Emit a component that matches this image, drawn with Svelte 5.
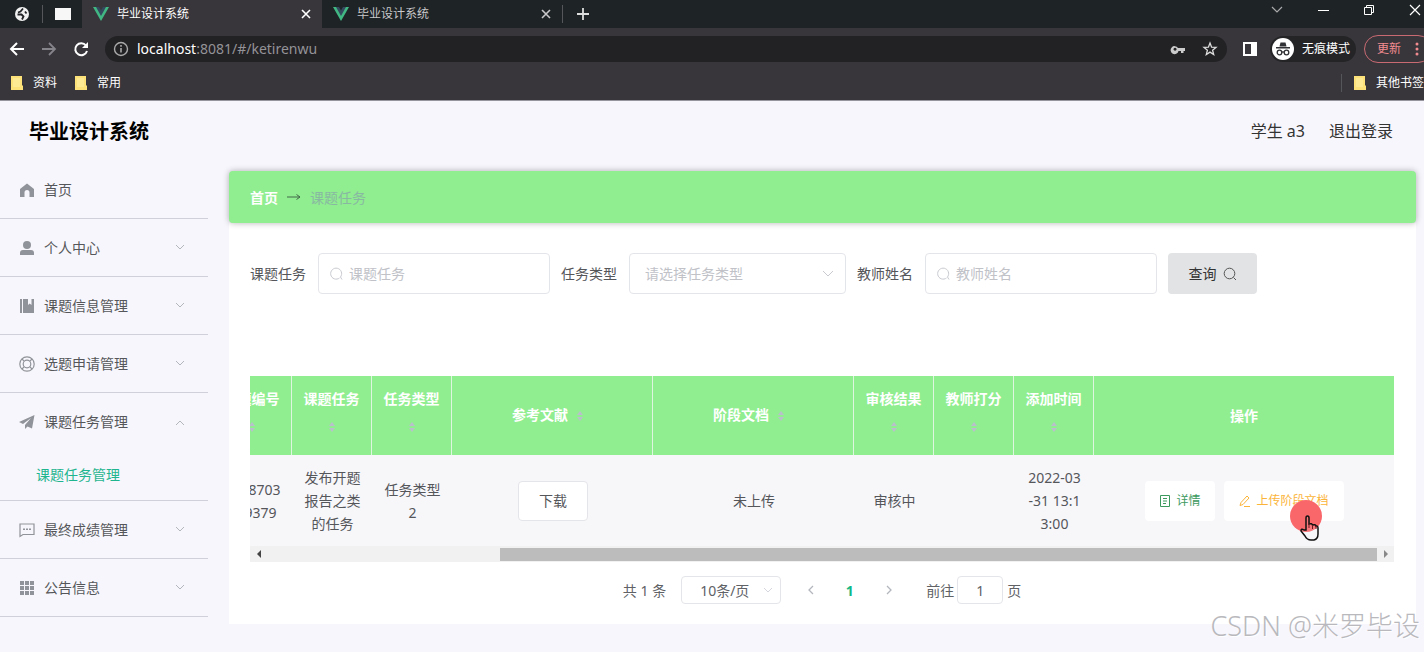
<script>
    let menu = [
        { title: "首页", icon: "home" },
        { title: "个人中心", icon: "user", children: [] },
        { title: "课题信息管理", icon: "book", children: [] },
        { title: "选题申请管理", icon: "help", children: [] },
        { title: "课题任务管理", icon: "plane", open: true, children: ["课题任务管理"] },
        { title: "最终成绩管理", icon: "chat", children: [] },
        { title: "公告信息", icon: "grid", children: [] }
    ]
    let columns = [
        { title: "课题编号", sort: true },
        { title: "课题任务", sort: true },
        { title: "任务类型", sort: true },
        { title: "参考文献", sort: true, wide: true },
        { title: "阶段文档", sort: true, wide: true },
        { title: "审核结果", sort: true },
        { title: "教师打分", sort: true },
        { title: "添加时间", sort: true },
        { title: "操作", last: true }
    ]
    let rows = [
        {
            id: "1648703579379",
            name: "发布开题报告之类的任务",
            type: "任务类型2",
            doc: "未上传",
            result: "审核中",
            score: "",
            time: "2022-03-31 13:13:00"
        }
    ]
    let name = ""
    let teacher = ""
    let type = ""
    let page = 1

    function Toggle(i){
        if(menu[i].children){
            menu[i].open = !menu[i].open;
            menu = menu;
        }
    }
</script>

<div class="page">
    <!-- Browser window: -->
    <div class="browser">
        <div class="tabs">
            <div class="pinned">
                <svg width="16" height="16" viewBox="0 0 16 16"><circle cx="8" cy="8" r="7" fill="#f1f1f1"/><path d="M9 2.500L6.500 5.500 4 6.500M3.500 8.500h4l2 2-1.500 3M11 5.500l1.500 2" fill="none" stroke="#202124" stroke-width="1.800"/></svg>
                <span class="line"></span>
                <svg width="16" height="12" viewBox="0 0 16 12"><path d="M0 0h16v12H0z" fill="#f7f7f7"/></svg>
            </div>
            {#each [true, false] as active}
                <div class="tab" class:active>
                    <svg width="16" height="14" viewBox="0 0 16 14"><path d="M0 0h4l4 7 4-7h4L8 14z" fill="#41b883"/><path d="M3 0h3l2 3.500 2-3.500h3L8 9z" fill="#35495e"/></svg>
                    <span>毕业设计系统</span>
                    <button aria-label="关闭标签页"><svg width="10" height="10" viewBox="0 0 10 10"><path d="M1 1l8 8M9 1L1 9" stroke="currentColor" stroke-width="1.600"/></svg></button>
                </div>
            {/each}
            <span class="line"></span>
            <button class="plus" aria-label="新标签页"><svg width="12" height="12" viewBox="0 0 12 12"><path d="M6 0v12M0 6h12" stroke="currentColor" stroke-width="1.800"/></svg></button>
            <div class="window">
                <button aria-label="搜索标签页"><svg width="12" height="12" viewBox="0 0 12 12"><path d="M1 3l5 5 5-5" fill="none" stroke="#aaa" stroke-width="1.200"/></svg></button>
                <button aria-label="最小化"><svg width="12" height="12" viewBox="0 0 12 12"><path d="M1 6.500h11" stroke="#fff"/></svg></button>
                <button aria-label="还原"><svg width="12" height="12" viewBox="0 0 12 12"><path d="M1.500 3.500h7v7h-7zM3.500 3.500v-2h7v7h-2" fill="none" stroke="#fff"/></svg></button>
                <button aria-label="关闭"><svg width="12" height="12" viewBox="0 0 12 12"><path d="M1 1l10 10M11 1L1 11" stroke="#fff" stroke-width="1.200"/></svg></button>
            </div>
        </div>
        <div class="toolbar">
            <button aria-label="后退"><svg width="16" height="16" viewBox="0 0 16 16"><path d="M15 8H2M8 2L2 8l6 6" fill="none" stroke="#fff" stroke-width="2"/></svg></button>
            <button aria-label="前进"><svg width="16" height="16" viewBox="0 0 16 16"><path d="M1 8h13M8 2l6 6-6 6" fill="none" stroke="#85848a" stroke-width="1.800"/></svg></button>
            <button aria-label="刷新"><svg width="16" height="16" viewBox="0 0 16 16"><path d="M13 4.500A6 6 0 1 0 14 10" fill="none" stroke="#fff" stroke-width="2"/><path d="M15 1v6H9z" fill="#fff"/></svg></button>
            <div class="omnibox">
                <svg width="16" height="16" viewBox="0 0 16 16"><circle cx="8" cy="8" r="6.500" fill="none" stroke="#aaa" stroke-width="1.400"/><path d="M8 7v4.500M8 4v1.800" stroke="#aaa" stroke-width="1.600"/></svg>
                <span class="url"><b>localhost</b>:8081/#/ketirenwu</span>
                <svg width="16" height="16" viewBox="0 0 16 16"><path d="M8 7h7v3h-1.500v2h-2.500v-2H8.500A4 4 0 1 1 8 7zM5 6.700a1.500 1.500 0 1 0 .1 0z" fill="#ccc" fill-rule="evenodd"/></svg>
                <svg width="16" height="16" viewBox="0 0 16 16"><path d="M8 2l1.600 4.200 4.400.2-3.400 2.800 1.100 4.300L8 11.100l-3.700 2.400 1.100-4.300L2 6.400l4.400-.2z" fill="none" stroke="#ddd" stroke-width="1.300"/></svg>
            </div>
            <svg width="14" height="14" viewBox="0 0 14 14"><path d="M0 0h14v14H0zM2 2v10h6V2z" fill="#fff" fill-rule="evenodd"/></svg>
            <div class="incognito">
                <svg width="22" height="22" viewBox="0 0 22 22"><circle cx="11" cy="11" r="11" fill="#fff"/><path d="M7.500 8.500L8.500 4.500h5l1 4zM4 9h14v1.400H4z" fill="#303134"/><g fill="none" stroke="#303134" stroke-width="1.300"><circle cx="7.500" cy="14.500" r="2.300"/><circle cx="14.500" cy="14.500" r="2.300"/><path d="M9.800 14h2.400"/></g></svg>
                无痕模式
            </div>
            <button class="update">更新
                <svg width="4" height="14" viewBox="0 0 4 14" fill="#f28b90"><circle cx="2" cy="2" r="1.500"/><circle cx="2" cy="7" r="1.500"/><circle cx="2" cy="12" r="1.500"/></svg>
            </button>
        </div>
        <div class="bookmarks">
            {#each ["资料", "常用", "其他书签"] as mark, i}
                {#if i == 2}<span class="line"></span>{/if}
                <a href="#/">
                    <svg width="12" height="14" viewBox="0 0 12 14"><path d="M0 0h11v9l1 1v4H0z" fill="#fde27a"/><path d="M2 2h7v9H2z" fill="#ffea94"/></svg>
                    {mark}
                </a>
            {/each}
        </div>
    </div>

    <header>
        <h1>毕业设计系统</h1>
        <span>学生 a3</span>
        <a href="#/login">退出登录</a>
    </header>

    <div class="body">
        <nav>
            {#each menu as item, i}
                <div class="item">
                    <button on:click={() => {Toggle(i)}}>
                        <svg width="16" height="16" viewBox="0 0 16 16" fill="#909399">
                            {#if item.icon == "home"}
                                <path d="M8 1.500L1 7v8h4.500v-4.500a2.500 2.500 0 0 1 5 0V15H15V7z"/>
                            {:else if item.icon == "user"}
                                <circle cx="8" cy="5" r="4"/><path d="M1 15v-2q0-3 3-3h8q3 0 3 3v2z"/>
                            {:else if item.icon == "book"}
                                <path d="M1 1h2v14H1zM4 1h5v6l1.700-1.500L12.500 7V1H15v14H4z"/>
                            {:else if item.icon == "help"}
                                <g fill="none" stroke="#909399" stroke-width="1.200"><circle cx="8" cy="8" r="7.200"/><circle cx="8" cy="8" r="3.800"/><path d="M3 3l2.300 2.300M13 3l-2.300 2.300M3 13l2.300-2.300M13 13l-2.300-2.300"/></g>
                            {:else if item.icon == "plane"}
                                <path d="M15.500 1L0 8l4 2 8-6-6 7v4l2.500-2.500L13 14.500z"/>
                            {:else if item.icon == "chat"}
                                <path d="M1 2h14v10.500H4L1 14.500z" fill="none" stroke="#909399" stroke-width="1.200"/><path d="M4 6.500h2v1.500H4zM7 6.500h2v1.500H7zM10 6.500h2v1.500h-2z"/>
                            {:else}
                                <path d="M1 1h4v4H1zM6 1h4v4H6zM11 1h4v4h-4zM1 6h4v4H1zM6 6h4v4H6zM11 6h4v4h-4zM1 11h4v4H1zM6 11h4v4H6zM11 11h4v4h-4z"/>
                            {/if}
                        </svg>
                        <span>{item.title}</span>
                        {#if item.children}
                            <svg class="arrow" class:open={item.open} width="10" height="10" viewBox="0 0 10 10"><path d="M1 2l4 4 4-4" fill="none" stroke="#b4b6bd"/></svg>
                        {/if}
                    </button>
                    {#if item.open}
                        {#each item.children as child}
                            <a href="#/ketirenwu">{child}</a>
                        {/each}
                    {/if}
                </div>
            {/each}
        </nav>

        <main>
            <div class="crumbs">
                <a href="#/">首页</a>
                <svg width="14" height="8" viewBox="0 0 14 8"><path d="M0 4h13M9.500 1.500L13 4 9.500 6.500" fill="none" stroke="#43664a"/></svg>
                <span>课题任务</span>
            </div>
            <div class="panel">
                <form class="filters" on:submit|preventDefault>
                    <label for="name">课题任务</label>
                    <div class="field">
                        <svg width="14" height="14" viewBox="0 0 14 14"><path d="M10.500 11A5.500 5.500 0 1 1 11.500 10l1.500 2.500" fill="none" stroke="#c8cad0"/></svg>
                        <input id="name" placeholder="课题任务" bind:value={name}>
                    </div>
                    <label for="type">任务类型</label>
                    <div class="field pick">
                        <select id="type" bind:value={type}>
                            <option value="">请选择任务类型</option>
                            <option value="2">任务类型2</option>
                        </select>
                        <svg width="12" height="12" viewBox="0 0 12 12"><path d="M1 3l5 5 5-5" fill="none" stroke="#c8cad0"/></svg>
                    </div>
                    <label for="teacher">教师姓名</label>
                    <div class="field">
                        <svg width="14" height="14" viewBox="0 0 14 14"><path d="M10.500 11A5.500 5.500 0 1 1 11.500 10l1.500 2.500" fill="none" stroke="#c8cad0"/></svg>
                        <input id="teacher" placeholder="教师姓名" bind:value={teacher}>
                    </div>
                    <button class="search">查询
                        <svg width="14" height="14" viewBox="0 0 14 14"><circle cx="6.500" cy="6.500" r="5.300" fill="none" stroke="#555"/><path d="M10.500 10.500L13 13" stroke="#555"/></svg>
                    </button>
                </form>

                <div class="tableBox">
                    <table>
                        <thead>
                            <tr>
                                {#each columns as col}
                                    <th class:wide={col.wide} class:last={col.last}>
                                        {col.title}{#if col.sort}<span class="caret"><svg width="8" height="12" viewBox="0 0 8 12"><path d="M4 1l3 4H1zM4 11l3-4H1z" fill="#b9bfcb"/></svg></span>{/if}
                                    </th>
                                {/each}
                            </tr>
                        </thead>
                        <tbody>
                            {#each rows as row}
                                <tr>
                                    <td>{row.id}</td>
                                    <td>{row.name}</td>
                                    <td>{row.type}</td>
                                    <td><button class="download">下载</button></td>
                                    <td>{row.doc}</td>
                                    <td>{row.result}</td>
                                    <td>{row.score}</td>
                                    <td>{row.time}</td>
                                    <td>
                                        <div class="actions">
                                            <button class="detail">
                                                <svg width="12" height="12" viewBox="0 0 12 12"><path d="M1.500.5h9v11h-9zM4 3.500h4M4 6h4M4 8.500h3" fill="none" stroke="currentColor"/></svg>
                                                详情
                                            </button>
                                            <button class="upload">
                                                <svg width="12" height="12" viewBox="0 0 12 12"><path d="M2 7.500L8 1l2 2-6 6.500-3 1zM5 11.500h6" fill="none" stroke="currentColor"/></svg>
                                                上传阶段文档
                                                <span class="pointer">
                                                    <svg width="36" height="46" viewBox="0 0 36 46"><circle cx="17" cy="17" r="16" fill="#f9676b"/><path d="M17 31V19q0-2 1.500-2t1.500 2v6q3-1 3.500 1 3-1 3.500 1 2-.5 2 2v6q0 5-4 6h-3q-4 0-6-4l-4-5q0-3 3-1z" fill="#fff" fill-opacity=".1" stroke="#111" stroke-width="1.500"/><path d="M20 24v5M23.500 26v4M27 27v3" stroke="#6b1a20"/></svg>
                                                </span>
                                            </button>
                                        </div>
                                    </td>
                                </tr>
                            {/each}
                        </tbody>
                    </table>
                </div>
                <div class="scroll">
                    <svg width="17" height="16" viewBox="0 0 17 16"><path d="M11 4v8L7 8z" fill="#444"/></svg>
                    <div class="track"><div class="thumb"></div></div>
                    <svg width="17" height="16" viewBox="0 0 17 16"><path d="M7 4v8l4-4z" fill="#888"/></svg>
                </div>

                <div class="pager">
                    <span>共 1 条</span>
                    <div class="size">
                        <select aria-label="每页条数">
                            <option>10条/页</option>
                            <option>20条/页</option>
                        </select>
                        <svg width="10" height="10" viewBox="0 0 10 10"><path d="M1 3l4 4 4-4" fill="none" stroke="#d5d7dd"/></svg>
                    </div>
                    <button aria-label="上一页"><svg width="10" height="12" viewBox="0 0 10 12"><path d="M7 2L3 6l4 4" fill="none" stroke="#b4b6bd" stroke-width="1.300"/></svg></button>
                    <button class="current">1</button>
                    <button aria-label="下一页"><svg width="10" height="12" viewBox="0 0 10 12"><path d="M3 2l4 4-4 4" fill="none" stroke="#b4b6bd" stroke-width="1.300"/></svg></button>
                    <label for="page">前往</label>
                    <input id="page" bind:value={page}>
                    <span>页</span>
                </div>
            </div>
        </main>
    </div>
    <div class="watermark">CSDN @米罗毕设</div>
</div>

<style>
    :global(body) {
        background-color: #f7f6fc;
    }
    .page {
        --green: #90ee90;
        --border: #e4e5ea;
        --text: #55565a;

        position: relative;
        min-height: 100vh;
        overflow: hidden;
        color: var(--text);
        font-family: "Noto Sans", "Noto Sans CJK SC", sans-serif;
        font-size: 14px;
        line-height: 23px;
    }
    svg {
        display: block;
        flex: none;
    }
    button, input, select {
        font: inherit;
        color: inherit;
        margin: 0;
        padding: 0;
        border: none;
        background: none;
        box-sizing: border-box;
        outline: none;
    }
    select {
        appearance: none;
    }
    a {
        color: inherit;
        text-decoration: none;
    }

    /* Browser window */
    .browser {
        background-color: #38363b;
        border-bottom: 1px solid #96949c;
        color: #fff;
        font-size: 12px;
        line-height: 16px;
    }
    .tabs {
        display: flex;
        align-items: center;
        height: 28px;
        background-color: #1e2326;
    }
    .pinned {
        display: flex;
        align-items: center;
        gap: 12px;
        width: 82px;
        padding-left: 14px;
        box-sizing: border-box;
    }
    .line {
        width: 1px;
        height: 18px;
        background-color: #55565a;
    }
    .tab {
        display: flex;
        align-items: center;
        gap: 8px;
        width: 240px;
        height: 28px;
        padding: 0 11px;
        box-sizing: border-box;
        color: #c8c8ca;
    }
    .tab.active {
        background-color: #38363b;
        color: #fff;
    }
    .tab button {
        margin-left: auto;
    }
    .plus {
        margin-left: 14px;
        color: #ddd;
    }
    .window {
        display: flex;
        gap: 34px;
        height: 20px;
        align-items: center;
        align-self: flex-start;
        margin-left: auto;
        padding-right: 3px;
    }
    .toolbar {
        display: flex;
        align-items: center;
        gap: 16px;
        height: 41px;
        padding-left: 9px;
        margin-right: -8px;
    }
    .omnibox {
        flex: 1;
        display: flex;
        align-items: center;
        gap: 16px;
        height: 26px;
        padding: 0 9px 0 8px;
        border-radius: 13px;
        background-color: #222124;
    }
    .url {
        flex: 1;
        margin-left: -8px;
        color: #949397;
        font-size: 14px;
    }
    .url b {
        color: #fff;
        font-weight: 400;
    }
    .incognito {
        display: flex;
        align-items: center;
        gap: 8px;
        margin-left: -3px;
        margin-right: -8px;
        padding: 2px 6px 2px 2px;
        border-radius: 13px;
        background-color: #242427;
        white-space: nowrap;
    }
    .update {
        display: flex;
        align-items: center;
        justify-content: space-between;
        width: 68px;
        height: 28px;
        padding: 0 12px;
        border: 1px solid #c96a72;
        border-radius: 14px;
        color: #f28b90;
    }
    .bookmarks {
        display: flex;
        align-items: center;
        gap: 18px;
        height: 31px;
        padding: 0 0 4px 11px;
        box-sizing: border-box;
    }
    .bookmarks a {
        display: flex;
        gap: 10px;
        align-items: center;
    }
    .bookmarks .line {
        margin-left: auto;
        margin-right: -6px;
    }

    header {
        display: flex;
        align-items: center;
        gap: 24px;
        height: 60px;
        padding: 0 31px 0 29px;
        color: #333;
        font-size: 16px;
    }
    h1 {
        flex: 1;
        margin: 0;
        color: #000;
        font-size: 20px;
    }
    .body {
        display: flex;
        gap: 21px;
        padding-right: 8px;
    }

    /* Side menu */
    nav {
        flex: none;
        width: 208px;
    }
    .item {
        border-bottom: 1px solid #cfd0da;
    }
    .item button {
        display: flex;
        align-items: center;
        gap: 9px;
        width: 100%;
        height: 57px;
        padding: 0 23px 0 19px;
        text-align: left;
    }
    .item span {
        flex: 1;
    }
    .item a {
        display: block;
        padding-left: 36px;
        height: 50px;
        line-height: 50px;
        color: #1fb58f;
    }
    .arrow.open {
        transform: rotate(180deg);
    }

    main {
        flex: 1;
        min-width: 0;
        padding-top: 10px;
    }
    .crumbs {
        display: flex;
        align-items: center;
        gap: 9px;
        height: 52px;
        padding: 0 21px;
        border-radius: 4px;
        background-color: var(--green);
        box-shadow: 0 0 6px rgba(0, 0, 0, 0.3);
        position: relative;
    }
    .crumbs a {
        color: #fff;
        font-weight: 700;
    }
    .crumbs span {
        color: #89b8a2;
    }
    .panel {
        padding: 30px 22px 20px 21px;
        background-color: #fff;
    }
    .filters {
        display: flex;
        align-items: center;
        gap: 11px;
        margin-bottom: 82px;
    }
    .filters label {
        padding-right: 1px;
    }
    .field {
        display: flex;
        align-items: center;
        gap: 6px;
        width: 232px;
        height: 41px;
        padding: 0 10px;
        border: 1px solid var(--border);
        border-radius: 4px;
        box-sizing: border-box;
    }
    .field input, .field select {
        flex: 1;
        min-width: 0;
        height: 100%;
    }
    .field input::placeholder {
        color: #c0c2c8;
        opacity: 1;
    }
    .field.pick {
        width: 217px;
        padding: 0 11px 0 15px;
        color: #c0c2c8;
    }
    .search {
        display: flex;
        align-items: center;
        justify-content: center;
        gap: 6px;
        width: 89px;
        height: 41px;
        border-radius: 4px;
        background-color: #e2e3e4;
        color: #333;
    }

    .tableBox {
        display: flex;
        justify-content: flex-end;
        overflow: hidden;
    }
    table {
        flex: none;
        width: 100%;
        min-width: 1182px;
        table-layout: fixed;
        border-collapse: separate;
        border-spacing: 0;
        text-align: center;
    }
    th {
        width: 80px;
        height: 79px;
        padding: 0 10px;
        box-sizing: border-box;
        border-right: 1px solid #e0f5e0;
        background-color: var(--green);
        color: #fff;
    }
    th.wide {
        width: 201px;
    }
    th.last {
        width: auto;
        border-right: none;
    }
    .caret {
        display: inline-flex;
        align-items: center;
        justify-content: center;
        width: 24px;
        height: 34px;
        vertical-align: middle;
    }
    td {
        padding: 11px 11px 11px 12px;
        background-color: #f7f7fa;
        line-break: anywhere;
    }
    .download {
        width: 70px;
        height: 40px;
        border: 1px solid var(--border);
        border-radius: 4px;
        background-color: #fff;
        vertical-align: middle;
    }
    .actions {
        display: flex;
        justify-content: center;
        gap: 9px;
    }
    .actions button {
        position: relative;
        display: flex;
        align-items: center;
        justify-content: center;
        gap: 5px;
        width: 70px;
        height: 40px;
        border-radius: 4px;
        background-color: #fff;
        color: #3d9a5f;
        font-size: 12px;
        white-space: nowrap;
    }
    .actions .upload {
        width: 120px;
        color: #fbb43a;
    }
    .pointer {
        position: absolute;
        left: 65px;
        top: 18px;
    }
    .scroll {
        display: flex;
        height: 16px;
        background-color: #f1f1f1;
    }
    .track {
        flex: 1;
        display: flex;
        justify-content: flex-end;
        padding: 2px 0 1px;
    }
    .thumb {
        width: 79%;
        background-color: #bcbcbd;
    }

    .pager {
        display: flex;
        align-items: center;
        justify-content: center;
        margin-top: 14px;
        color: #606266;
    }
    .size {
        display: flex;
        align-items: center;
        width: 100px;
        height: 28px;
        margin: 0 15px;
        padding: 0 7px 0 18px;
        border: 1px solid var(--border);
        border-radius: 4px;
        box-sizing: border-box;
    }
    .size select {
        flex: 1;
        min-width: 0;
    }
    .pager button {
        display: flex;
        justify-content: center;
        width: 39px;
    }
    .pager .size + button {
        margin-left: -5px;
    }
    .pager .current {
        color: #13b886;
        font-weight: 700;
    }
    .pager label {
        margin: 0 3px 0 18px;
    }
    .pager input {
        width: 46px;
        height: 28px;
        margin-right: 4px;
        border: 1px solid var(--border);
        border-radius: 4px;
        background-color: #fff;
        text-align: center;
    }
    .watermark {
        position: absolute;
        right: 4px;
        bottom: 6px;
        color: #b9b9bd;
        font-size: 27px;
        font-weight: 300;
        line-height: 40px;
        text-shadow: 1px 1px 1px #fff;
    }
</style>
